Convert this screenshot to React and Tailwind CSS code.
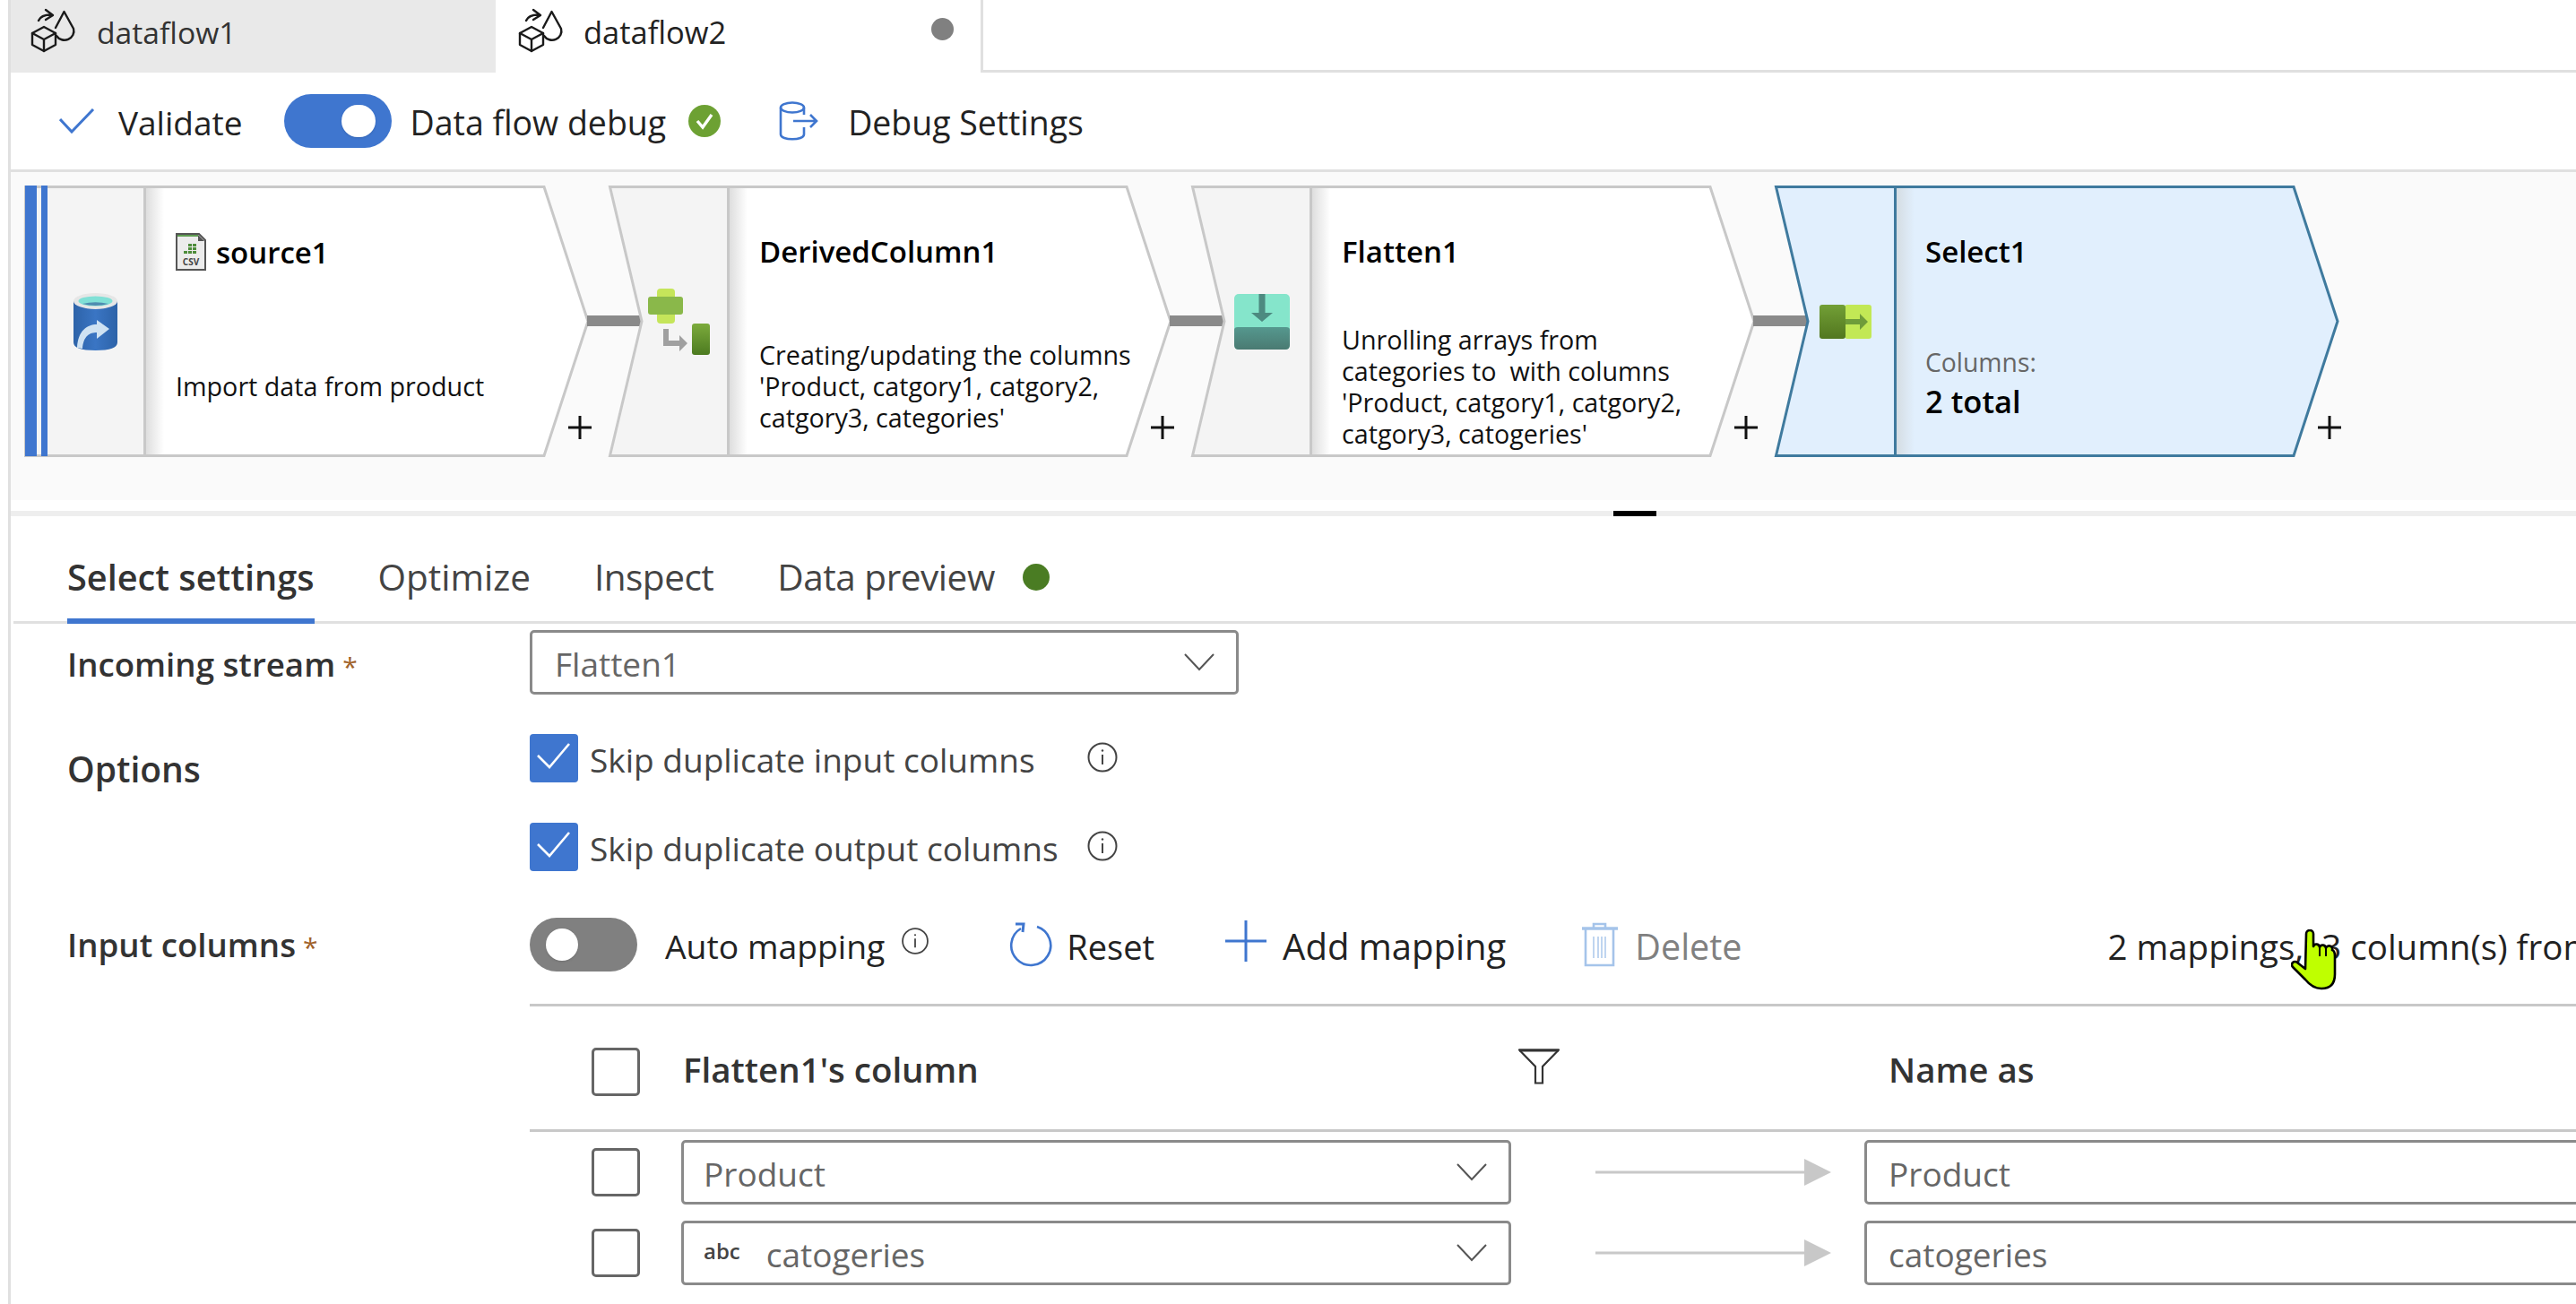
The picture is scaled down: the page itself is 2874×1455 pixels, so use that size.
import React from "react";

const BLUE = "#3f76cf";

function FlowIcon() {
  return (
    <svg width="52" height="50" viewBox="34 8 52 50" fill="none" stroke="#1a1a1a" strokeWidth="2.4" strokeLinejoin="round" strokeLinecap="round" className="shrink-0">
      <path d="M49 29 L62 36 V49 L49 56 L36 49 V36 Z" />
      <path d="M36 36 L49 43 L62 36 M49 43 V56" />
      <path d="M62 30 L71.5 12 L82 31 A10.5 10 0 0 1 63 39" />
      <path d="M43 22 Q46 15 58 15.5 M51 10 L59 16 L51 21" />
    </svg>
  );
}

function Chevron() {
  return (
    <svg width="34" height="20" viewBox="0 0 34 20" fill="none" stroke="#555" strokeWidth="2" className="shrink-0">
      <path d="M1 1 L17 18 L33 1" />
    </svg>
  );
}

function Info() {
  return (
    <svg width="34" height="34" viewBox="0 0 34 34" fill="none" stroke="#444" strokeWidth="2" className="shrink-0">
      <circle cx="17" cy="17" r="15.5" />
      <path d="M17 14 V25" />
      <circle cx="17" cy="9.5" r="1.2" fill="#444" stroke="none" />
    </svg>
  );
}

function Check() {
  return (
    <div className="w-[54px] h-[54px] rounded-[4px] bg-[#3f76cf] shrink-0">
      <svg width="54" height="54" viewBox="0 0 54 54" fill="none" stroke="#fff" strokeWidth="2.6">
        <path d="M9 24 L22 37 L44 11" />
      </svg>
    </div>
  );
}

function EmptyBox() {
  return <div className="w-[54px] h-[54px] rounded-[5px] border-[3px] border-[#666] shrink-0 bg-white" />;
}

function Plus({ className }) {
  return (
    <svg width="26" height="26" viewBox="0 0 26 26" fill="none" stroke="#111" strokeWidth="3" className={className}>
      <path d="M13 0 V26 M0 13 H26" />
    </svg>
  );
}

function CylinderIcon() {
  return (
    <svg width="49" height="64" viewBox="0 0 49 64" className="shrink-0">
      <defs>
        <linearGradient id="cyl" x1="0" x2="1" y1="0" y2="0">
          <stop offset="0" stopColor="#2d63a8" />
          <stop offset="0.5" stopColor="#3a75c4" />
          <stop offset="1" stopColor="#2d63a8" />
        </linearGradient>
      </defs>
      <path d="M0 9 V55 Q0 64 24.5 64 Q49 64 49 55 V9 Z" fill="url(#cyl)" />
      <ellipse cx="24.5" cy="9" rx="24.5" ry="9" fill="#e6e6e6" />
      <ellipse cx="24.5" cy="9" rx="19" ry="5.5" fill="#80e0d6" />
      <path d="M10 12 Q24.5 8.5 39 12 Q24.5 16 10 12 Z" fill="#4f8cb0" />
      <path d="M4 61 C5 42 15 35 26 35 V30 L40 40 L26 51 V44 C18 44 11 48 10 62 Z" fill="#cfe2f2" />
    </svg>
  );
}

function CsvIcon() {
  return (
    <svg width="34" height="42" viewBox="0 0 34 42" className="shrink-0">
      <path d="M1 1 H26 L33 8 V41 H1 Z" fill="#ececec" stroke="#555" strokeWidth="2" />
      <path d="M2 3 H25" stroke="#3d8a2b" strokeWidth="1.6" />
      <path d="M25 2 V9 H32 Z" fill="#555" />
      <g fill="#4d8c3a">
        <rect x="14" y="12" width="4" height="3" /><rect x="19" y="12" width="4" height="3" />
        <rect x="14" y="16" width="4" height="3" /><rect x="19" y="16" width="4" height="3" />
        <rect x="14" y="20" width="4" height="3" /><rect x="19" y="20" width="4" height="3" />
        <rect x="9" y="20" width="4" height="3" />
      </g>
      <text x="17" y="36" textAnchor="middle" fontSize="10" fontWeight="700" fill="#444" fontFamily="Open Sans, sans-serif">CSV</text>
    </svg>
  );
}

function DerivedIcon() {
  return (
    <svg width="69" height="74" viewBox="0 0 69 74" className="shrink-0">
      <defs>
        <linearGradient id="grn1" x1="0" x2="0" y1="0" y2="1">
          <stop offset="0" stopColor="#7cab3c" />
          <stop offset="1" stopColor="#4c7a20" />
        </linearGradient>
      </defs>
      <rect x="10" y="0" width="20" height="39" rx="4" fill="#c5e55a" />
      <rect x="0" y="9" width="39" height="20" rx="3" fill="#8ab84a" />
      <path d="M17 45 H23 V58 H35 V52 L44 61 L35 70 V64 H17 Z" fill="#a0a0a0" />
      <rect x="49" y="39" width="20" height="35" rx="3" fill="url(#grn1)" />
    </svg>
  );
}

function FlattenIcon() {
  return (
    <svg width="62" height="62" viewBox="0 0 62 62" className="shrink-0">
      <defs>
        <linearGradient id="tl" x1="0" x2="0" y1="0" y2="1">
          <stop offset="0" stopColor="#55988e" />
          <stop offset="1" stopColor="#4a7a72" />
        </linearGradient>
      </defs>
      <rect width="62" height="62" rx="5" fill="#85e5cb" />
      <path d="M0 40 Q0 37 4 37 H58 Q62 37 62 40 V57 Q62 62 57 62 H5 Q0 62 0 57 Z" fill="url(#tl)" />
      <path d="M27.5 0 H34.5 V21 H43 L31 31 L19 21 H27.5 Z" fill="#4d8a80" />
    </svg>
  );
}

function SelectIcon() {
  return (
    <svg width="58" height="38" viewBox="0 0 58 38" className="shrink-0">
      <defs>
        <linearGradient id="grn2" x1="0" x2="0" y1="0" y2="1">
          <stop offset="0" stopColor="#729f36" />
          <stop offset="1" stopColor="#52771f" />
        </linearGradient>
      </defs>
      <rect x="28" width="30" height="38" rx="3" fill="#c2e855" />
      <rect width="29" height="38" rx="3" fill="url(#grn2)" />
      <path d="M29 16 H45 V10 L54 19 L45 28 V22 H29 Z" fill="#6f9c3a" />
    </svg>
  );
}

function Node({ width, notched, selected, source, panelW, iconPad, icon, connector, children }) {
  const h = 303;
  const w = width;
  const shoulder = w - 48;
  const notch = notched ? 36 : 0;
  const fillMain = selected ? "#e1effd" : "#ffffff";
  const fillPanel = selected ? "#e1effd" : "#f4f4f4";
  const stroke = selected ? "#3f7a9e" : "#c8c8c8";
  const outline = `1.5,1.5 ${shoulder},1.5 ${w + 1},${h / 2} ${shoulder},${h - 1.5} 1.5,${h - 1.5} ${notch + 1},${h / 2}`;
  return (
    <div className="relative shrink-0 h-[303px] flex" style={{ width: w }}>
      <svg width={w} height={h} viewBox={`0 0 ${w} ${h}`} className="absolute inset-0 overflow-visible">
        <polygon points={outline} fill={fillMain} />
        <polygon points={`1.5,1.5 ${panelW},1.5 ${panelW},${h - 1.5} 1.5,${h - 1.5} ${notch + 1},${h / 2}`} fill={fillPanel} />
        <polygon points={outline} fill="none" stroke={stroke} strokeWidth="3" />
        <path d={`M${panelW + 1.5} 0 V${h}`} stroke={stroke} strokeWidth="3" />
      </svg>
      {source && (
        <div className="absolute left-[1px] top-0 bottom-[1px] flex gap-[5px]">
          <div className="w-[13px] bg-[#3f76cf]" />
          <div className="w-[7px] bg-[#3f76cf]" />
        </div>
      )}
      <div className="relative flex items-center shrink-0" style={{ width: panelW + 3, paddingLeft: iconPad }}>
        {icon}
      </div>
      <div className={`relative flex-1 flex flex-col my-[3px] bg-gradient-to-r to-transparent to-[20px] ${selected ? "from-[#d5dde3] pl-[32px]" : "from-[#dedede] pl-[33px]"}`}>
        {children}
      </div>
      <Plus className="absolute right-[-5px] top-[257px]" />
      {connector && <div className="absolute left-full top-[145px] w-[62px] h-[12px] bg-[#8a8a8a]" />}
    </div>
  );
}

function Title({ children }) {
  return <div className="text-[33px] leading-[40px] font-semibold text-black whitespace-nowrap">{children}</div>;
}

function Head({ children }) {
  return <div className="h-[142px] -mt-[3px] pt-[54px] flex items-start">{children}</div>;
}

function Desc({ children }) {
  return (
    <div className="h-[154px] pt-[9px] flex items-center">
      <div className="text-[28.7px] leading-[35px] text-[#111] whitespace-pre">{children}</div>
    </div>
  );
}

function SelectBox({ className, children }) {
  return (
    <div className={`h-[72px] rounded-[5px] border-[3px] border-[#8a8a8a] bg-white flex items-center justify-between shrink-0 ${className}`}>
      {children}
    </div>
  );
}

function Label({ children, req, className = "text-[36.7px]" }) {
  return (
    <div className={`leading-[40px] font-semibold text-[#333] whitespace-nowrap ${className}`}>
      {children}
      {req && <span className="text-[#a0622a] ml-[8px] text-[30px] font-medium">*</span>}
    </div>
  );
}

function TabItem({ active, children, className = "" }) {
  return (
    <div className={`h-[120px] pt-[46px] leading-[44px] whitespace-nowrap ${active ? "text-[39.7px] text-[#333] font-semibold border-b-[6px] border-[#3f76cf] -mb-[3px]" : "text-[40.5px] text-[#444]"} ${className}`}>
      {children}
    </div>
  );
}

function MapRow({ typeTag, name, rowClass }) {
  return (
    <div className={`flex items-center ${rowClass}`}>
      <div className="ml-[69px]"><EmptyBox /></div>
      <SelectBox className="w-[926px] ml-[46px] pl-[22px] pr-[24px]">
        <div className="flex items-center pt-[3px] text-[#666] text-[37px] leading-[40px]">
          {typeTag && <span className="text-[24px] font-semibold text-[#444] mr-[29px] -mt-[8px]">abc</span>}
          {name}
        </div>
        <Chevron />
      </SelectBox>
      <svg width="263" height="30" viewBox="0 0 263 30" className="ml-[94px] shrink-0">
        <rect y="13.5" width="236" height="3" fill="#c8c8c8" />
        <path d="M233 0 L263 15 L233 30 Z" fill="#c8c8c8" />
      </svg>
      <SelectBox className="w-[1000px] ml-[37px] pl-[24px]">
        <div className="pt-[3px] text-[#666] text-[37px] leading-[40px]">{name}</div>
      </SelectBox>
    </div>
  );
}

export default function App() {
  return (
    <div className="w-[2874px] h-[1455px] overflow-hidden bg-white pl-[9px] font-['Open_Sans',sans-serif]">
      <div className="h-full border-l-[3px] border-[#e0e0e0] flex flex-col">
        {/* file tabs */}
        <div className="flex h-[81px] shrink-0">
          <div className="w-[541px] bg-[#e9e9e9] flex items-center pl-[22px] pb-[14px]">
            <FlowIcon />
            <span className="ml-[22px] pt-[4px] text-[33.7px] leading-[40px] text-[#333]">dataflow1</span>
          </div>
          <div className="w-[544px] border-r-[3px] border-[#e0e0e0] flex items-center pl-[25px] pr-[30px] pb-[14px]">
            <FlowIcon />
            <span className="ml-[21px] pt-[4px] text-[34.5px] leading-[40px] text-[#222] font-medium">dataflow2</span>
            <div className="ml-auto mt-[-2px] w-[25px] h-[25px] rounded-full bg-[#808080]" />
          </div>
          <div className="flex-1 border-b-[3px] border-[#e0e0e0]" />
        </div>

        {/* toolbar */}
        <div className="h-[111px] shrink-0 border-b-[3px] border-[#e0e0e0] flex items-center pl-[54px] text-[37px] leading-[40px] text-[#222] whitespace-nowrap [&>span]:pt-[3px]">
          <svg width="40" height="28" viewBox="0 0 40 28" fill="none" stroke={BLUE} strokeWidth="3" className="shrink-0">
            <path d="M1 12 L14 26 L38 1" />
          </svg>
          <span className="ml-[26px]">Validate</span>
          <div className="ml-[47px] w-[120px] h-[60px] rounded-full bg-[#3f76cf] flex items-center justify-end pr-[18px] shrink-0">
            <div className="w-[38px] h-[36px] rounded-full bg-white shadow" />
          </div>
          <span className="ml-[20px] text-[37.5px]">Data flow debug</span>
          <svg width="36" height="36" viewBox="0 0 36 36" className="ml-[25px] shrink-0">
            <circle cx="18" cy="18" r="18" fill="#6da133" />
            <path d="M10 18 L16 25 L26 11" fill="none" stroke="#fff" strokeWidth="3.4" />
          </svg>
          <svg width="44" height="44" viewBox="0 0 44 44" fill="none" stroke={BLUE} strokeWidth="2.6" className="ml-[65px] shrink-0">
            <ellipse cx="15" cy="7" rx="13" ry="5.5" />
            <path d="M2 7 V37 C2 44 28 44 28 37 V29 M28 7 V15" />
            <path d="M16 22 H42 M35 15 L42 22 L35 29" />
          </svg>
          <span className="ml-[33px] text-[37.4px]">Debug Settings</span>
        </div>

        {/* canvas */}
        <div className="h-[366px] shrink-0 bg-[#fafafa] pl-[15px] pt-[15px] flex gap-[24px]">
          <Node width={628} source panelW={133} iconPad={55} icon={<CylinderIcon />} connector>
            <div className="h-[142px] -mt-[3px] pt-[52px] flex items-start">
              <div className="flex items-center gap-[11px]">
                <CsvIcon />
                <div className="pt-[3px]"><Title>source1</Title></div>
              </div>
            </div>
            <Desc>Import data from product</Desc>
          </Node>
          <Node width={626} notched panelW={132} iconPad={44} icon={<DerivedIcon />} connector>
            <Head><Title>DerivedColumn1</Title></Head>
            <Desc>{"Creating/updating the columns\n'Product, catgory1, catgory2,\ncatgory3, categories'"}</Desc>
          </Node>
          <Node width={627} notched panelW={132} iconPad={48} icon={<FlattenIcon />} connector>
            <Head><Title>Flatten1</Title></Head>
            <Desc>{"Unrolling arrays from\ncategories to  with columns\n'Product, catgory1, catgory2,\ncatgory3, catogeries'"}</Desc>
          </Node>
          <Node width={627} notched selected panelW={133} iconPad={50} icon={<SelectIcon />}>
            <Head><Title>Select1</Title></Head>
            <div className="h-[154px] pt-[2px] flex flex-col justify-center">
              <div className="text-[28.3px] leading-[35px] text-[#666]">Columns:</div>
              <div className="mt-[6px] text-[34.5px] leading-[40px] font-semibold text-black">2 total</div>
            </div>
          </Node>
        </div>

        {/* splitter */}
        <div className="h-[6px] mt-[12px] shrink-0 bg-[#eeeeee]">
          <div className="ml-[1788px] w-[48px] h-full bg-black" />
        </div>

        {/* settings tabs */}
        <div className="ml-[3px] h-[120px] shrink-0 border-b-[3px] border-[#e0e0e0] flex pl-[60px] gap-[71px]">
          <TabItem active>Select settings</TabItem>
          <TabItem>Optimize</TabItem>
          <TabItem className="tracking-[-0.5px]">Inspect</TabItem>
          <TabItem className="flex items-start tracking-[-0.45px]">
            Data preview
            <div className="ml-[31px] mt-[7px] w-[30px] h-[30px] rounded-full bg-[#4a7c23]" />
          </TabItem>
        </div>

        {/* form */}
        <div className="pl-[63px] flex-1 min-h-0 flex flex-col">
          <div className="flex mt-[7px] items-center">
            <div className="w-[516px] shrink-0 pt-[6px]"><Label req>Incoming stream</Label></div>
            <SelectBox className="w-[791px] pl-[25px] pr-[24px]">
              <div className="pt-[3px] text-[#666] text-[37px] leading-[40px]">Flatten1</div>
              <Chevron />
            </SelectBox>
          </div>

          <div className="flex mt-[44px]">
            <div className="w-[516px] shrink-0 pt-[19px]"><Label className="text-[39px]">Options</Label></div>
            <div className="flex flex-col gap-[45px] text-[37px] leading-[40px] text-[#444]">
              <div className="flex items-center w-[656px]">
                <Check />
                <span className="ml-[13px] pt-[3px]">Skip duplicate input columns</span>
                <div className="ml-auto -mt-[3px]"><Info /></div>
              </div>
              <div className="flex items-center w-[656px]">
                <Check />
                <span className="ml-[13px] pt-[3px]">Skip duplicate output columns</span>
                <div className="ml-auto -mt-[3px]"><Info /></div>
              </div>
            </div>
          </div>

          <div className="flex mt-[52px]">
            <div className="w-[516px] shrink-0 pt-[10px]"><Label req>Input columns</Label></div>
            <div className="w-[2283px] shrink-0">
              <div className="relative h-[60px] flex items-center text-[37px] leading-[40px] text-[#222] whitespace-pre [&>span]:pt-[4px]">
                <div className="w-[120px] h-[60px] rounded-full bg-[#808080] flex items-center pl-[18px] shrink-0">
                  <div className="w-[36px] h-[36px] rounded-full bg-white shadow" />
                </div>
                <span className="ml-[31px] text-[37.3px]">Auto mapping</span>
                <div className="ml-[17px] -mt-[8px] scale-90"><Info /></div>
                <svg width="50" height="50" viewBox="0 0 50 50" fill="none" stroke={BLUE} strokeWidth="2.6" className="ml-[86px] shrink-0">
                  <path d="M33 5 A22 22 0 1 1 15 7" />
                  <path d="M9 2 L18 2 L17 11" strokeWidth="3" />
                </svg>
                <span className="ml-[16px] text-[38px]">Reset</span>
                <svg width="46" height="46" viewBox="0 0 46 46" fill="none" stroke={BLUE} strokeWidth="3" className="ml-[79px] -mt-[8px] shrink-0">
                  <path d="M23 0 V46 M0 23 H46" />
                </svg>
                <span className="ml-[18px] text-[40px]">Add mapping</span>
                <svg width="40" height="50" viewBox="0 0 40 50" fill="none" stroke="#a5c4ea" strokeWidth="2.6" className="ml-[85px] shrink-0">
                  <path d="M13 6 V2 H26 V6" />
                  <path d="M0 7 H40" strokeWidth="3.4" />
                  <path d="M4 8 V48 H35 V8" />
                  <path d="M13 16 V40 M18 16 V40 M22 16 V40 M26 16 V40" strokeWidth="1.4" />
                </svg>
                <span className="ml-[19px] text-[39.5px] text-[#808080]">Delete</span>
                <span className="ml-[408px] text-[38.5px]">2 mappings,  3 column(s) from</span>
                <svg width="52" height="68" viewBox="0 0 52 68" className="absolute left-[1965px] top-[13px]" fill="#bfff00" stroke="#000" strokeWidth="2.6" strokeLinejoin="round">
                  <path d="M17 5 A4 4 0 0 1 25 5 V19 A3.6 3.6 0 0 1 32 20 A3.6 3.6 0 0 1 39 21 A3.6 3.6 0 0 1 46 23 Q49 24 49 30 V50 Q49 66 34 66 Q24 66 16 56 L2 42 A3.5 3.5 0 0 1 7 37 L16 44 Z" />
                  <path d="M32 20 V30 M39 21 V30" fill="none" strokeWidth="2" />
                </svg>
              </div>

              <div className="mt-[36px] h-[143px] border-y-[3px] border-[#c8c8c8] flex items-center pt-[8px]">
                <div className="ml-[69px]"><EmptyBox /></div>
                <div className="ml-[48px] -mt-[6px] w-[932px] shrink-0 text-[38.5px] leading-[40px] font-semibold text-[#333]">Flatten1's column</div>
                <svg width="46" height="40" viewBox="0 0 46 40" fill="none" stroke="#333" strokeWidth="2.2" className="-mt-[12px] shrink-0">
                  <path d="M1 1.5 H45 L27 20 V38.5 H19 V20 Z" />
                  <path d="M1 2 H45" strokeWidth="3" />
                </svg>
                <div className="ml-[367px] -mt-[6px] text-[38.5px] leading-[40px] font-semibold text-[#333]">Name as</div>
              </div>

              <MapRow name="Product" rowClass="mt-[9px]" />
              <MapRow name="catogeries" typeTag rowClass="mt-[18px]" />
            </div>
          </div>
        </div>
      </div>
    </div>
  );
}
